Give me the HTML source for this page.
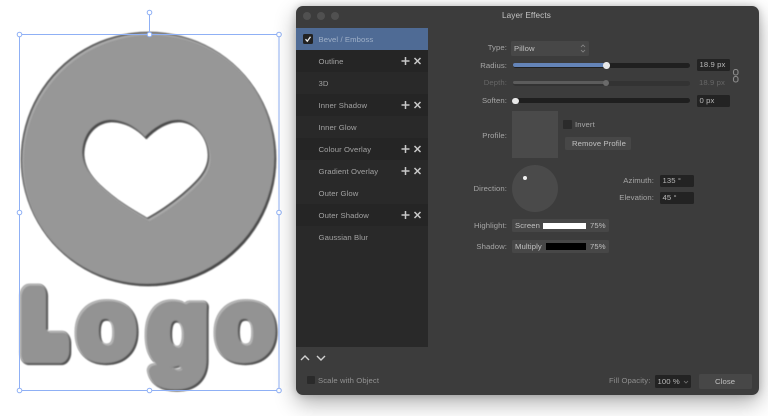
<!DOCTYPE html>
<html>
<head>
<meta charset="utf-8">
<style>
html,body{margin:0;padding:0;background:#fff;}
body{width:768px;height:416px;position:relative;overflow:hidden;font-family:"Liberation Sans",sans-serif;}
.win{position:absolute;left:296px;top:6px;width:463px;height:389px;background:#3c3c3c;border-radius:7px;box-shadow:0 8px 22px rgba(0,0,0,.32),0 0 8px rgba(0,0,0,.2);}
.a{position:absolute;white-space:nowrap;font-size:7.7px;letter-spacing:.1px;line-height:10px;filter:blur(.3px);}
.lab{color:#a6a6a6;text-align:right;width:70px;}
.b{position:absolute;}
.row{position:absolute;left:296px;width:132px;height:22px;}
.row span{position:absolute;left:22.5px;top:6.5px;font-size:7.7px;letter-spacing:.1px;line-height:10px;color:#a2a2a2;white-space:nowrap;filter:blur(.3px);}
.cb{position:absolute;left:7px;top:6px;width:10px;height:10px;background:#2a2a2a;border-radius:1.5px;}
.ic{position:absolute;left:104px;top:6px;}
.dot{position:absolute;top:6px;width:8px;height:8px;border-radius:50%;background:#555;}
.track{position:absolute;height:5px;border-radius:3px;background:#1f1f1f;}
.field{position:absolute;background:#232323;border-radius:1.5px;color:#b8b8b8;font-size:7.7px;letter-spacing:.1px;line-height:12px;padding-left:2.5px;box-sizing:border-box;}
.pan{position:absolute;background:#474747;border-radius:1.5px;}
</style>
</head>
<body>
<svg class="b" style="left:0;top:0" width="296" height="416" viewBox="0 0 296 416">
<defs>
<filter id="bev" x="-5%" y="-5%" width="110%" height="110%" color-interpolation-filters="sRGB">
<feGaussianBlur in="SourceAlpha" stdDeviation="0.8" result="sa"/>
<feOffset in="sa" dx="1" dy="1" result="o1"/>
<feOffset in="sa" dx="2.6" dy="2.8" result="o2"/>
<feOffset in="sa" dx="-1.5" dy="-1.8" result="o3"/>
<feComposite in="sa" in2="o1" operator="out" result="tl"/>
<feFlood flood-color="#505050"/><feComposite in2="tl" operator="in" result="tlc"/>
<feComposite in="o1" in2="o2" operator="out" result="hl0"/>
<feComposite in="hl0" in2="sa" operator="in" result="hl"/>
<feFlood flood-color="#b4b4b4" flood-opacity=".7"/><feComposite in2="hl" operator="in" result="hlc"/>
<feComposite in="sa" in2="o3" operator="out" result="br"/>
<feFlood flood-color="#464646"/><feComposite in2="br" operator="in" result="brc"/>
<feFlood flood-color="#979797"/><feComposite in2="sa" operator="in" result="base"/>
<feMerge><feMergeNode in="base"/><feMergeNode in="hlc"/><feMergeNode in="tlc"/><feMergeNode in="brc"/></feMerge>
</filter>
<filter id="bev2" x="-10%" y="-10%" width="120%" height="120%" color-interpolation-filters="sRGB">
<feGaussianBlur in="SourceAlpha" stdDeviation="0.9" result="sa"/>
<feOffset in="sa" dx="1.5" dy="1.5" result="o1"/>
<feOffset in="sa" dx="-1.5" dy="-1.5" result="o3"/>
<feComposite in="sa" in2="o1" operator="out" result="tl"/>
<feFlood flood-color="#b8b8b8"/><feComposite in2="tl" operator="in" result="tlc"/>
<feComposite in="sa" in2="o3" operator="out" result="br"/>
<feFlood flood-color="#4b4b4b"/><feComposite in2="br" operator="in" result="brc"/>
<feFlood flood-color="#939393"/><feComposite in2="sa" operator="in" result="base"/>
<feMerge><feMergeNode in="base"/><feMergeNode in="tlc"/><feMergeNode in="brc"/></feMerge>
</filter>
</defs>
<g filter="url(#bev)">
<path fill-rule="evenodd" fill="#979797" d="M148.5 32a127.5 127 0 1 0 .01 0Z M146.5 139C138 129 124 121.500 111 122C95 123 84 137 84 155C85 174 100 186 118 200C128 207 138 213 147 218C158 212 170 204 182 194C197 181 208 171 208 155C208 137 195 122 179 122C167 122 155 130 146.500 139Z"/>
</g>
<g filter="url(#bev2)" font-family="Liberation Sans" font-weight="700" fill="#939393" stroke="#939393" stroke-width="12" stroke-linejoin="round" font-size="100">
<text transform="translate(25 352.700) scale(.63 .82)" stroke-width="30">L</text>
<text transform="translate(77 358) scale(.97 .97)">o</text>
<text transform="translate(147 363) scale(1.02 1.05)">g</text>
<text transform="translate(216 358) scale(.97 .97)">o</text>
</g>
<g fill="none" stroke="#8fb0f5" stroke-width="1">
<rect x="19.500" y="34.500" width="259.500" height="356"/>
<line x1="149.500" y1="13" x2="149.500" y2="34"/>
</g>
<g fill="#fff" stroke="#8fb0f5" stroke-width="1">
<circle cx="149.500" cy="12.500" r="2.300"/>
<circle cx="19.500" cy="34.500" r="2.300"/>
<circle cx="149.500" cy="34.500" r="2.300"/>
<circle cx="279" cy="34.500" r="2.300"/>
<circle cx="19.500" cy="212.500" r="2.300"/>
<circle cx="279" cy="212.500" r="2.300"/>
<circle cx="19.500" cy="390.500" r="2.300"/>
<circle cx="149.500" cy="390.500" r="2.300"/>
<circle cx="279" cy="390.500" r="2.300"/>
</g>
</svg>

<div class="win">
<div class="dot" style="left:7px;background:#505050"></div>
<div class="dot" style="left:21px;background:#505050"></div>
<div class="dot" style="left:35px;background:#505050"></div>
</div>
<div class="a" style="left:502px;top:11px;color:#c4c4c4;font-size:8.2px;">Layer Effects</div>

<div class="b" style="left:296px;top:28px;width:132px;height:319px;background:#292929;"></div>
<div class="row" style="top:28px;background:#4f6b95;"><div class="cb" style="background:#222;"><svg width="10" height="10" style="position:absolute;left:0;top:0"><path d="M2.500 5.200L4.300 7.200L7.500 2.800" fill="none" stroke="#eee" stroke-width="1.300"/></svg></div><span style="color:#9fb0c8">Bevel / Emboss</span></div>
<div class="row" style="top:50px;background:#252525"><span>Outline</span><svg class="ic" width="22" height="10"><path d="M1.500 5H9.500M5.500 1V9M14.500 2L20.500 8M20.500 2L14.500 8" stroke="#c8c8c8" stroke-width="1.500" fill="none"/></svg></div>
<div class="row" style="top:72px;"><span>3D</span></div>
<div class="row" style="top:94px;background:#252525"><span>Inner Shadow</span><svg class="ic" width="22" height="10"><path d="M1.500 5H9.500M5.500 1V9M14.500 2L20.500 8M20.500 2L14.500 8" stroke="#c8c8c8" stroke-width="1.500" fill="none"/></svg></div>
<div class="row" style="top:116px;"><span>Inner Glow</span></div>
<div class="row" style="top:138px;background:#252525"><span>Colour Overlay</span><svg class="ic" width="22" height="10"><path d="M1.500 5H9.500M5.500 1V9M14.500 2L20.500 8M20.500 2L14.500 8" stroke="#c8c8c8" stroke-width="1.500" fill="none"/></svg></div>
<div class="row" style="top:160px;"><span>Gradient Overlay</span><svg class="ic" width="22" height="10"><path d="M1.500 5H9.500M5.500 1V9M14.500 2L20.500 8M20.500 2L14.500 8" stroke="#c8c8c8" stroke-width="1.500" fill="none"/></svg></div>
<div class="row" style="top:182px;"><span>Outer Glow</span></div>
<div class="row" style="top:204px;background:#252525"><span>Outer Shadow</span><svg class="ic" width="22" height="10"><path d="M1.500 5H9.500M5.500 1V9M14.500 2L20.500 8M20.500 2L14.500 8" stroke="#c8c8c8" stroke-width="1.500" fill="none"/></svg></div>
<div class="row" style="top:226px;"><span>Gaussian Blur</span></div>

<svg class="b" style="left:300px;top:352px" width="28" height="12"><path d="M1 8L5 4L9 8M17 4L21 8L25 4" fill="none" stroke="#d0d0d0" stroke-width="1.400"/></svg>
<div class="b" style="left:307px;top:376px;width:8px;height:8px;background:#2a2a2a;border-radius:1px;"></div>
<div class="a" style="left:318px;top:375.500px;color:#929292;">Scale with Object</div>

<!-- Right panel -->
<div class="a lab" style="left:437px;top:43px;">Type:</div>
<div class="pan" style="left:511px;top:41px;width:78px;height:15px;"></div>
<div class="a" style="left:514px;top:43.500px;color:#c0c0c0;">Pillow</div>
<svg class="b" style="left:580px;top:44px" width="6" height="9"><path d="M1 3L3 1L5 3M1 6L3 8L5 6" fill="none" stroke="#888" stroke-width=".8"/></svg>

<div class="a lab" style="left:437px;top:60.500px;">Radius:</div>
<div class="track" style="left:513px;top:62.500px;width:177px;"></div>
<div class="track" style="left:513px;top:63px;width:93px;height:4px;background:#6484b8;"></div>
<div class="b" style="left:603px;top:62px;width:6.500px;height:6.500px;border-radius:50%;background:#e8e8e8;"></div>
<div class="field" style="left:697px;top:59px;width:33px;height:12px;">18.9 px</div>

<div class="a lab" style="left:437px;top:78px;color:#666;">Depth:</div>
<div class="track" style="left:513px;top:80.500px;width:177px;background:#333;"></div>
<div class="track" style="left:513px;top:81px;width:93px;height:3px;background:#5c5c5c;"></div>
<div class="b" style="left:603px;top:79.500px;width:6px;height:6px;border-radius:50%;background:#6a6a6a;"></div>
<div class="a" style="left:699px;top:78px;color:#666;">18.9 px</div>
<svg class="b" style="left:732px;top:68px" width="8" height="16"><rect x="1.500" y="1.500" width="4.500" height="5.500" rx="2" fill="none" stroke="#8c8c8c" stroke-width="1.100"/><rect x="1.500" y="8.500" width="4.500" height="5.500" rx="2" fill="none" stroke="#8c8c8c" stroke-width="1.100"/></svg>

<div class="a lab" style="left:437px;top:95.500px;">Soften:</div>
<div class="track" style="left:513px;top:98px;width:177px;"></div>
<div class="b" style="left:512px;top:97.500px;width:6.500px;height:6.500px;border-radius:50%;background:#e8e8e8;"></div>
<div class="field" style="left:697px;top:94.500px;width:33px;height:12px;">0 px</div>

<div class="a lab" style="left:437px;top:130.500px;">Profile:</div>
<div class="b" style="left:512px;top:111px;width:46px;height:47px;background:#4a4a4a;"></div>
<div class="b" style="left:563px;top:120px;width:9px;height:9px;background:#2b2b2b;border-radius:1px;"></div>
<div class="a" style="left:575px;top:119.500px;color:#a8a8a8;">Invert</div>
<div class="pan" style="left:565px;top:137px;width:66px;height:13px;"></div>
<div class="a" style="left:572px;top:138.500px;color:#c0c0c0;">Remove Profile</div>

<div class="a lab" style="left:437px;top:183.500px;">Direction:</div>
<div class="b" style="left:512px;top:165px;width:46px;height:47px;border-radius:50%;background:#4a4a4a;"></div>
<div class="b" style="left:522.500px;top:175.500px;width:4.500px;height:4.500px;border-radius:50%;background:#f0f0f0;"></div>

<div class="a lab" style="left:584px;top:175.500px;">Azimuth:</div>
<div class="field" style="left:660px;top:174.500px;width:34px;height:12px;">135 °</div>
<div class="a lab" style="left:584px;top:193px;">Elevation:</div>
<div class="field" style="left:660px;top:192px;width:34px;height:12px;">45 °</div>

<div class="a lab" style="left:437px;top:221px;">Highlight:</div>
<div class="pan" style="left:512px;top:219px;width:97px;height:13px;"></div>
<div class="a" style="left:515px;top:220.500px;color:#c0c0c0;">Screen</div>
<div class="b" style="left:543px;top:223px;width:43px;height:6px;background:#fff;"></div>
<div class="a" style="left:590px;top:220.500px;color:#c0c0c0;">75%</div>

<div class="a lab" style="left:437px;top:242px;">Shadow:</div>
<div class="pan" style="left:512px;top:240px;width:97px;height:13px;"></div>
<div class="a" style="left:515px;top:242px;color:#c0c0c0;">Multiply</div>
<div class="b" style="left:545.500px;top:243px;width:40.500px;height:7px;background:#000;"></div>
<div class="a" style="left:590px;top:242px;color:#c0c0c0;">75%</div>

<div class="a" style="left:609px;top:376px;color:#8e8e8e;">Fill Opacity:</div>
<div class="field" style="left:655px;top:375px;width:36px;height:13px;line-height:13px;">100 %</div>
<svg class="b" style="left:683px;top:380px" width="6" height="4"><path d="M1 1L3 3L5 1" fill="none" stroke="#777" stroke-width=".8"/></svg>
<div class="pan" style="left:699px;top:374px;width:53px;height:15px;"></div>
<div class="a" style="left:715px;top:376.500px;color:#c0c0c0;">Close</div>
</body>
</html>
